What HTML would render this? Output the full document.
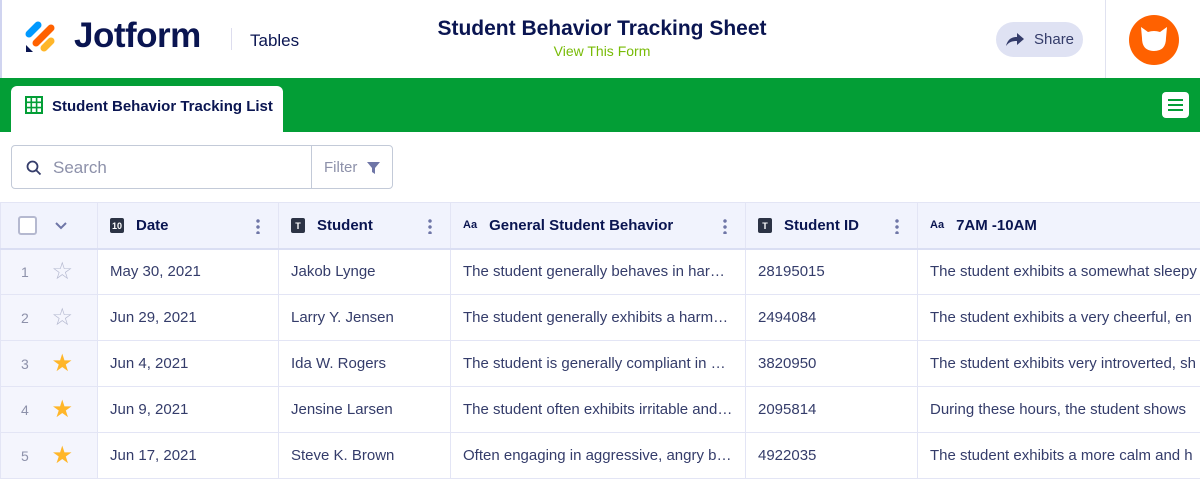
<!DOCTYPE html>
<html><head><meta charset="utf-8"><style>
*{box-sizing:border-box;margin:0;padding:0}
body{width:1200px;height:479px;overflow:hidden;background:#fff;font-family:"Liberation Sans",sans-serif;color:#0a1551;position:relative}
.hdr{position:absolute;left:0;top:0;width:1200px;height:78px;border-left:2px solid #d0d4f0}
.green{position:absolute;left:0;top:78px;width:1200px;height:54px;background:#039e36}
.tab{position:absolute;left:11px;top:86px;width:272px;height:46px;background:#fff;border-radius:6px 6px 0 0;font-size:15px;font-weight:bold;padding:12px 0 0 41px;color:#0a1551}
.search{position:absolute;left:11px;top:145px;width:382px;height:44px;border:1px solid #c3cad8;border-radius:4px}
table{position:absolute;left:0;top:202px;border-collapse:collapse;font-size:15px;color:#343c6a;table-layout:fixed;width:1200px}
td,th{border:1px solid #e3e5f5;height:46px;padding:0 12px;white-space:nowrap;overflow:hidden;text-overflow:ellipsis;text-align:left}
th{background:#f1f3fd;color:#0a1551;font-size:15px;height:46px;border-bottom:2px solid #dadef3;position:relative}
th .f{display:flex;align-items:center}
th .d{position:absolute;right:18px;top:15px;width:4px;height:16px;background:radial-gradient(circle,#6f76a7 1.5px,transparent 2px) 0 0/4px 6px}
td.n{background:#f4f5fd;color:#8d91aa;font-size:14px}
td.n1{border-right:none;padding:0 0 0 20px}
td.n2{border-left:none;padding:0 0 0 3px}
th.h1{border-right:none}th.h2{border-left:none;padding:0 0 0 6px}
.ic{display:inline-block;width:14px;height:15px;background:#2c3345;border-radius:2px;color:#fff;font-size:9px;text-align:center;line-height:16px;margin-right:12px;font-weight:bold}
.aa{font-size:11px;margin-right:12px;font-weight:bold}
</style></head><body>
<div class="hdr">
<svg style="position:absolute;left:22px;top:19px" width="34" height="36" viewBox="0 0 34 36"><line x1="5" y1="15" x2="14" y2="6" stroke="#0099ff" stroke-width="7" stroke-linecap="round"/><line x1="12" y1="24" x2="27" y2="9" stroke="#ff6100" stroke-width="7" stroke-linecap="round"/><line x1="20" y1="29" x2="27" y2="22" stroke="#ffb629" stroke-width="7" stroke-linecap="round"/><path d="M2 26 L2 33 L9 33Z" fill="#0a1551"/></svg>
<div style="position:absolute;left:72px;top:16px;font-size:35px;font-weight:bold;color:#0a1551;letter-spacing:-0.5px">Jotform</div>
<div style="position:absolute;left:229px;top:28px;width:1px;height:22px;background:#dde"></div>
<div style="position:absolute;left:248px;top:31px;font-size:17px;color:#0a1551">Tables</div>
<div style="position:absolute;left:0;width:1200px;top:17px;text-align:center;font-size:21px;font-weight:bold;color:#0a1551">Student Behavior Tracking Sheet</div>
<div style="position:absolute;left:0;width:1200px;top:43px;text-align:center;font-size:14px;color:#78bb07">View This Form</div>
<div style="position:absolute;left:994px;top:22px;width:87px;height:35px;background:#dfe2f3;border-radius:18px;font-size:15px;color:#343c6a;padding:9px 0 0 38px">Share</div>
<svg style="position:absolute;left:1004px;top:32px" width="18" height="14" viewBox="0 0 18 14"><path d="M0 14 C2 6 7 5 11 5 L11 1 L18 7 L11 13 L11 9 C6 9 3 10 0 14Z" fill="#343c6a"/></svg>
<div style="position:absolute;left:1103px;top:0;width:1px;height:78px;background:#e0e2f0"></div>
<div style="position:absolute;left:1127px;top:15px;width:50px;height:50px;border-radius:50%;background:#ff6100"></div>
<svg style="position:absolute;left:1137px;top:25px" width="30" height="28" viewBox="0 0 30 28"><path d="M2 2 L9 7 Q15 5 21 7 L28 2 L27 13 Q27 26 15 26 Q3 26 3 13Z" fill="#fff"/></svg>
</div>
<div class="green"><div style="position:absolute;left:1162px;top:14px;width:27px;height:26px;background:#fff;border-radius:4px"><div style="margin:7px 0 0 6px;width:15px;height:12px;border-top:2px solid #039e36;border-bottom:2px solid #039e36;position:relative"><div style="position:absolute;top:3px;width:15px;height:2px;background:#039e36"></div></div></div></div>
<div class="tab"><svg style="position:absolute;left:14px;top:10px" width="18" height="18" viewBox="0 0 18 18"><rect x="1" y="1" width="16" height="16" fill="none" stroke="#039e36" stroke-width="2"/><path d="M1 6.3H17M1 11.6H17M6.3 1V17M11.6 1V17" stroke="#039e36" stroke-width="1.6"/></svg>Student Behavior Tracking List</div>
<div class="search">
<svg style="position:absolute;left:14px;top:14px" width="16" height="16" viewBox="0 0 16 16"><circle cx="6.5" cy="6.5" r="5" fill="none" stroke="#343c6a" stroke-width="1.8"/><path d="M10 10L14.5 14.5" stroke="#343c6a" stroke-width="1.8"/></svg>
<span style="position:absolute;left:41px;top:12px;font-size:17px;color:#8d91aa">Search</span>
<div style="position:absolute;left:299px;top:0;width:1px;height:42px;background:#c3cad8"></div>
<span style="position:absolute;left:312px;top:13px;font-size:15px;color:#8d91aa">Filter</span>
<svg style="position:absolute;left:355px;top:16px" width="13" height="12" viewBox="0 0 13 12"><path d="M0 0H13L8 6V12L5 10V6Z" fill="#6f76a7"/></svg>
</div>
<table>
<colgroup><col style="width:48px"><col style="width:49px"><col style="width:181px"><col style="width:172px"><col style="width:295px"><col style="width:172px"><col style="width:283px"></colgroup>
<tr><th class="h1"><div style="width:19px;height:19px;border:2px solid #b5b9d0;border-radius:3px;background:#fff;margin-left:5px"></div></th><th class="h2"><svg width="12" height="8" viewBox="0 0 12 8"><path d="M1 1L6 6L11 1" fill="none" stroke="#6f76a7" stroke-width="2"/></svg></th>
<th><div class="f"><span class="ic">10</span>Date</div><span class="d"></span></th><th><div class="f"><span class="ic">T</span>Student</div><span class="d"></span></th><th><div class="f"><span class="aa">Aa</span>General Student Behavior</div><span class="d"></span></th><th><div class="f"><span class="ic">T</span>Student ID</div><span class="d"></span></th><th><div class="f"><span class="aa">Aa</span>7AM -10AM</div></th></tr>
<tr><td class="n n1">1</td><td class="n n2" style="color:#b5b9d0;font-size:24px">☆</td><td>May 30, 2021</td><td>Jakob Lynge</td><td>The student generally behaves in harmony</td><td>28195015</td><td style="text-overflow:clip">The student exhibits a somewhat sleepy</td></tr>
<tr><td class="n n1">2</td><td class="n n2" style="color:#b5b9d0;font-size:24px">☆</td><td>Jun 29, 2021</td><td>Larry Y. Jensen</td><td>The student generally exhibits a harmony</td><td>2494084</td><td style="text-overflow:clip">The student exhibits a very cheerful, en</td></tr>
<tr><td class="n n1">3</td><td class="n n2" style="color:#ffb629;font-size:24px">★</td><td>Jun 4, 2021</td><td>Ida W. Rogers</td><td>The student is generally compliant in class</td><td>3820950</td><td style="text-overflow:clip">The student exhibits very introverted, sh</td></tr>
<tr><td class="n n1">4</td><td class="n n2" style="color:#ffb629;font-size:24px">★</td><td>Jun 9, 2021</td><td>Jensine Larsen</td><td>The student often exhibits irritable and more</td><td>2095814</td><td style="text-overflow:clip">During these hours, the student shows</td></tr>
<tr><td class="n n1">5</td><td class="n n2" style="color:#ffb629;font-size:24px">★</td><td>Jun 17, 2021</td><td>Steve K. Brown</td><td>Often engaging in aggressive, angry behavior</td><td>4922035</td><td style="text-overflow:clip">The student exhibits a more calm and h</td></tr>
</table>
</body></html>
